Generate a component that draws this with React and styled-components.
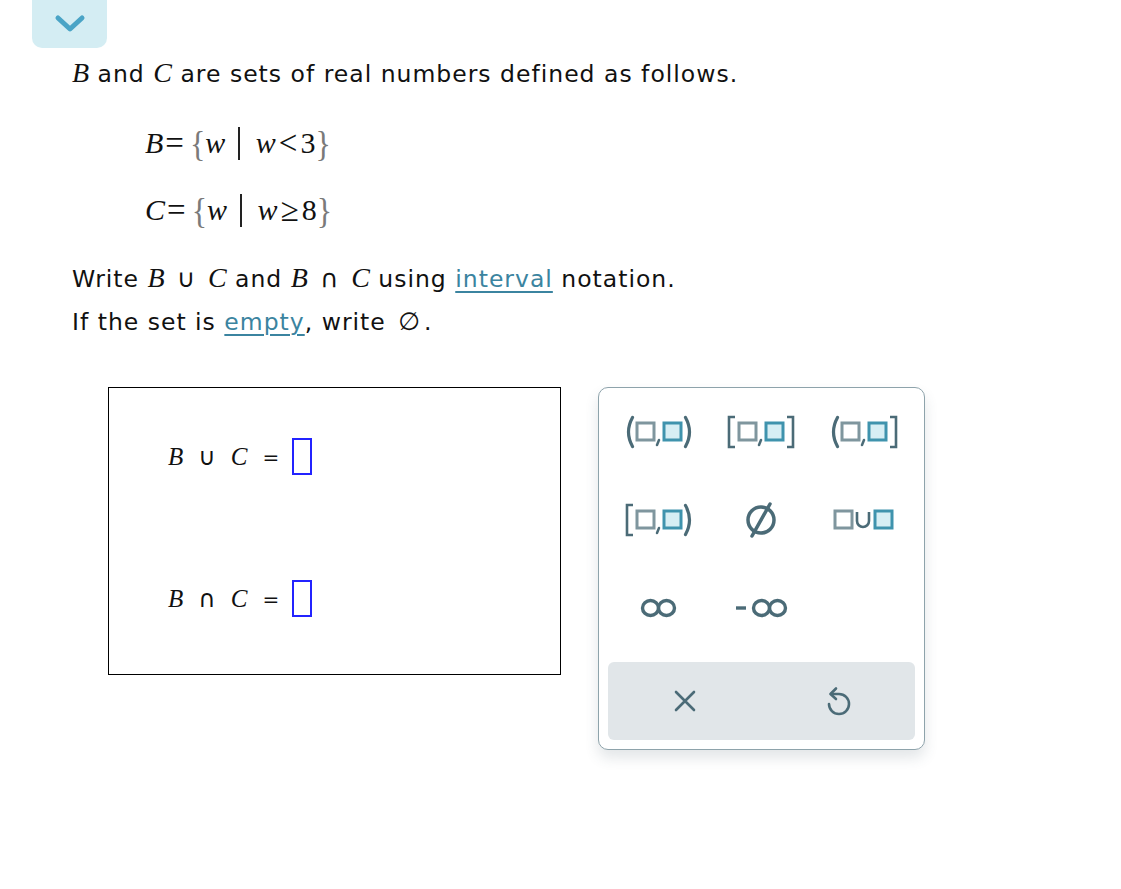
import React from 'react';
import styled, { createGlobalStyle } from 'styled-components';

const GlobalStyle = createGlobalStyle`
    body {
        margin: 0;
        background: #ffffff;
        font-family: "DejaVu Sans", Verdana, sans-serif;
        color: #111;
    }
`;

const Page = styled.div`
    width: 1121px;
    height: 889px;
`;

const Toggle = styled.button`
    display: flex;
    align-items: center;
    justify-content: center;
    margin-left: 32px;
    width: 75px;
    height: 48px;
    border: none;
    padding: 0;
    background: #d4edf3;
    border-radius: 0 0 10px 10px;
`;

const Content = styled.div`
    padding: 0 0 0 72px;
`;

const Para = styled.p`
    margin: 0;
    font-size: 23.5px;
    letter-spacing: 1px;
    line-height: 43px;
    height: 43px;
`;

const Var = styled.span`
    font-family: "Liberation Serif", "Times New Roman", serif;
    font-style: italic;
    font-size: 28px;
    letter-spacing: 0;
    line-height: 1;
`;

const Sym = styled.span`
    font-size: 25px;
    letter-spacing: 0;
    line-height: 1;
    margin: 0 4px;
`;

const Link = styled.span`
    color: #3b84a0;
    text-decoration: underline;
    text-decoration-thickness: 1.5px;
    text-underline-offset: 4px;
`;

const MathBlock = styled.div`
    padding: 27px 0 28px 73px;
    display: flex;
    flex-direction: column;
    gap: 27px;
`;

const MathLine = styled.div`
    display: flex;
    align-items: center;
    font-family: "Liberation Serif", "Times New Roman", serif;
    font-size: 30px;
    height: 40px;
`;

const Ital = styled.span`
    font-style: italic;
`;

const Op = styled.span`
    font-size: 33px;
    margin: 0 ${(p) => p.$mr ?? 2}px 0 ${(p) => p.$ml ?? 2}px;
`;

const Brace = styled.span`
    color: #7a7a7a;
    font-size: 32px;
    display: inline-block;
    transform: scaleY(1.15);
`;

const Bar = styled.span`
    display: inline-block;
    width: 1.5px;
    height: 33px;
    background: #222;
    margin: 0 16px 0 13px;
`;

const Work = styled.div`
    display: flex;
    align-items: flex-start;
    gap: 37px;
    margin: 43px 0 0 36px;
`;

const AnswerBox = styled.div`
    width: 392px;
    height: 236px;
    border: 1px solid #000;
    padding: 50px 0 0 59px;
    box-sizing: content-box;
    display: flex;
    flex-direction: column;
    gap: 105px;
`;

const AnswerRow = styled.div`
    display: flex;
    align-items: center;
    height: 37px;
`;

const RowVar = styled.span`
    font-family: "Liberation Serif", "Times New Roman", serif;
    font-style: italic;
    font-size: 25px;
`;

const RowOp = styled.span`
    font-family: "DejaVu Sans", sans-serif;
    font-size: ${(p) => p.$size || 24}px;
    margin: 0 ${(p) => p.$mr ?? 15}px 0 ${(p) => p.$ml ?? 15}px;
`;

const InputSlot = styled.span`
    display: inline-block;
    width: 16px;
    height: 33px;
    border: 2px solid #2323ff;
`;

const Keypad = styled.div`
    width: 307px;
    border: 1px solid #8ea3ab;
    border-radius: 10px;
    box-shadow: 0 8px 14px rgba(60, 80, 90, 0.14);
    padding: 0 9px 9px 9px;
    background: #fff;
`;

const KeyGrid = styled.div`
    display: grid;
    grid-template-columns: repeat(3, 1fr);
    grid-auto-rows: 88px;
    margin-bottom: 10px;
`;

const Key = styled.div`
    display: flex;
    align-items: center;
    justify-content: center;
`;

const ActionBar = styled.div`
    display: grid;
    grid-template-columns: 1fr 1fr;
    height: 78px;
    background: #e1e6e9;
    border-radius: 6px;
`;

const Action = styled.div`
    display: flex;
    align-items: center;
    justify-content: center;
`;

const DARK = '#4b6b77';
const GREY = '#7f969e';
const TEAL = '#3f93ad';
const FILL = '#d6eef4';

const Interval = ({ left, right }) => (
    <svg width="70" height="36" viewBox="0 0 70 36">
        {left === '(' ? (
            <path d="M8.5 3.5 Q0.5 18 8.5 32.5" fill="none" stroke={DARK} strokeWidth="3.2" strokeLinecap="round" />
        ) : (
            <path d="M9 3 H3 V33 H9" fill="none" stroke={DARK} strokeWidth="2.6" />
        )}
        <rect x="13" y="9" width="17" height="17" fill="none" stroke={GREY} strokeWidth="3" />
        <rect x="40" y="9" width="17" height="17" fill={FILL} stroke={TEAL} strokeWidth="3" />
        <path d="M35 26 L33 31" stroke={DARK} strokeWidth="2.5" strokeLinecap="round" />
        {right === ')' ? (
            <path d="M61.5 3.5 Q69.5 18 61.5 32.5" fill="none" stroke={DARK} strokeWidth="3.2" strokeLinecap="round" />
        ) : (
            <path d="M61 3 H67 V33 H61" fill="none" stroke={DARK} strokeWidth="2.6" />
        )}
    </svg>
);

const EmptySet = () => (
    <svg width="40" height="40" viewBox="0 0 40 40">
        <circle cx="20" cy="20" r="13" fill="none" stroke={DARK} strokeWidth="3.5" />
        <path d="M29 4 L11 36" stroke={DARK} strokeWidth="3.5" strokeLinecap="round" />
    </svg>
);

const UnionKey = () => (
    <svg width="64" height="26" viewBox="0 0 64 26">
        <rect x="3" y="4" width="17" height="17" fill="none" stroke={GREY} strokeWidth="3" />
        <path d="M25 5 V14 A6 6 0 0 0 37 14 V5" fill="none" stroke={DARK} strokeWidth="2.6" />
        <rect x="43" y="4" width="17" height="17" fill={FILL} stroke={TEAL} strokeWidth="3" />
    </svg>
);

const Infinity = ({ minus }) => (
    <svg width={minus ? 56 : 38} height="24" viewBox={`0 0 ${minus ? 56 : 38} 24`}>
        <g transform={minus ? 'translate(18 0)' : ''}>
            <ellipse cx="10.5" cy="12" rx="8" ry="7.5" fill="none" stroke={DARK} strokeWidth="3.4" />
            <ellipse cx="26.5" cy="12" rx="8" ry="7.5" fill="none" stroke={DARK} strokeWidth="3.4" />
        </g>
        {minus && <path d="M3 12 H13" stroke={DARK} strokeWidth="3.4" />}
    </svg>
);

const Chevron = () => (
    <svg width="34" height="22" viewBox="0 0 34 22">
        <path d="M5 5 L17 16 L29 5" fill="none" stroke="#4aa4c6" strokeWidth="5" strokeLinecap="round" strokeLinejoin="round" />
    </svg>
);

const Close = () => (
    <svg width="24" height="24" viewBox="0 0 24 24">
        <path d="M3 3 L21 21 M21 3 L3 21" stroke={DARK} strokeWidth="2.6" strokeLinecap="round" />
    </svg>
);

const Undo = () => (
    <svg width="28" height="34" viewBox="0 0 28 34">
        <path d="M7 10 H15 A10 10 0 1 1 5 20" fill="none" stroke={DARK} strokeWidth="2.6" strokeLinecap="round" />
        <path d="M12 4.5 L6.5 10 L12 15" fill="none" stroke={DARK} strokeWidth="2.6" strokeLinecap="round" strokeLinejoin="round" />
    </svg>
);

const SetDef = ({ name, rel, num }) => (
    <MathLine>
        <Ital>{name}</Ital>
        <Op $ml={2} $mr={6}>=</Op>
        <Brace>{'{'}</Brace>
        <Ital>w</Ital>
        <Bar />
        <Ital>w</Ital>
        <Op $ml={3} $mr={3}>{rel}</Op>
        <span>{num}</span>
        <Brace>{'}'}</Brace>
    </MathLine>
);

const App = () => (
    <Page>
        <GlobalStyle />
        <Toggle>
            <Chevron />
        </Toggle>
        <Content>
            <Para style={{ marginTop: 5 }}>
                <Var>B</Var> and <Var>C</Var> are sets of real numbers defined as follows.
            </Para>
            <MathBlock>
                <SetDef name="B" rel="<" num="3" />
                <SetDef name="C" rel="≥" num="8" />
            </MathBlock>
            <Para>
                Write <Var>B</Var> <Sym>∪</Sym> <Var>C</Var> and <Var>B</Var> <Sym>∩</Sym> <Var>C</Var> using <Link>interval</Link> notation.
            </Para>
            <Para>
                If the set is <Link>empty</Link>, write <Sym>∅</Sym>.
            </Para>
            <Work>
                <AnswerBox>
                    <AnswerRow>
                        <RowVar>B</RowVar>
                        <RowOp>∪</RowOp>
                        <RowVar>C</RowVar>
                        <RowOp $size={20} $ml={15} $mr={13}>=</RowOp>
                        <InputSlot />
                    </AnswerRow>
                    <AnswerRow>
                        <RowVar>B</RowVar>
                        <RowOp>∩</RowOp>
                        <RowVar>C</RowVar>
                        <RowOp $size={20} $ml={15} $mr={13}>=</RowOp>
                        <InputSlot />
                    </AnswerRow>
                </AnswerBox>
                <Keypad>
                    <KeyGrid>
                        <Key><Interval left="(" right=")" /></Key>
                        <Key><Interval left="[" right="]" /></Key>
                        <Key><Interval left="(" right="]" /></Key>
                        <Key><Interval left="[" right=")" /></Key>
                        <Key><EmptySet /></Key>
                        <Key><UnionKey /></Key>
                        <Key><Infinity /></Key>
                        <Key><Infinity minus /></Key>
                        <Key />
                    </KeyGrid>
                    <ActionBar>
                        <Action><Close /></Action>
                        <Action><Undo /></Action>
                    </ActionBar>
                </Keypad>
            </Work>
        </Content>
    </Page>
);

export default App;
